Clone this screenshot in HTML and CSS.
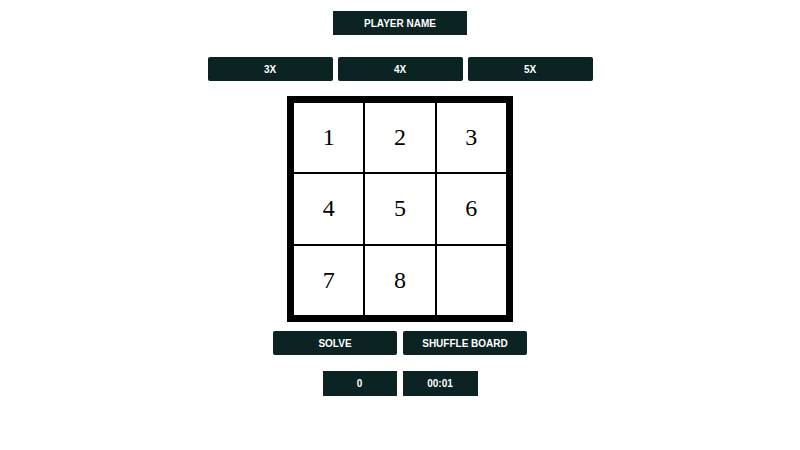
FILE: index.html
```html
<!DOCTYPE html>
<html>
<head>
<meta charset="utf-8">
<link rel="stylesheet" href="styles.css">
</head>
<body>
<main class="app">
  <input class="name" type="text" placeholder="PLAYER NAME">
  <div class="sizes">
    <button class="btn size">3X</button>
    <button class="btn size">4X</button>
    <button class="btn size">5X</button>
  </div>
  <div class="board">
    <div class="cell">1</div>
    <div class="cell">2</div>
    <div class="cell">3</div>
    <div class="cell">4</div>
    <div class="cell">5</div>
    <div class="cell">6</div>
    <div class="cell">7</div>
    <div class="cell">8</div>
    <div class="cell empty"></div>
  </div>
  <div class="actions">
    <button class="btn action">SOLVE</button>
    <button class="btn action">SHUFFLE BOARD</button>
  </div>
  <div class="stats">
    <div class="stat moves">0</div>
    <div class="stat time">00:01</div>
  </div>
</main>
</body>
</html>
```
FILE: styles.css
```css
html, body {
  margin: 0;
  padding: 0;
  background: #ffffff;
}
body {
  font-family: "Liberation Sans", Arial, sans-serif;
}
.app {
  display: flex;
  flex-direction: column;
  align-items: center;
  padding-top: 11px;
}
.name {
  box-sizing: border-box;
  width: 134px;
  height: 24px;
  margin: 0;
  border: none;
  outline: none;
  background: #0b2322;
  color: #ffffff;
  text-align: center;
  font-family: "Liberation Sans", Arial, sans-serif;
  font-weight: bold;
  font-size: 10px;
  padding: 0;
}
.name::placeholder {
  color: #ffffff;
  opacity: 1;
}
.btn {
  box-sizing: border-box;
  height: 24px;
  margin: 0;
  padding: 0;
  border: none;
  border-radius: 2px;
  background: #0b2322;
  color: #ffffff;
  font-family: "Liberation Sans", Arial, sans-serif;
  font-weight: bold;
  font-size: 10px;
}
.sizes {
  display: flex;
  gap: 5px;
  margin-top: 22px;
}
.size {
  width: 125px;
}
.board {
  box-sizing: border-box;
  width: 226px;
  height: 226px;
  margin-top: 15px;
  border: 6px solid #000000;
  display: grid;
  grid-template-columns: repeat(3, 1fr);
  grid-template-rows: repeat(3, 1fr);
}
.cell {
  box-sizing: border-box;
  border: 1px solid #000000;
  display: flex;
  align-items: center;
  justify-content: center;
  font-family: "Liberation Serif", "Times New Roman", serif;
  font-size: 24px;
  color: #000000;
}
.actions {
  display: flex;
  gap: 6px;
  margin-top: 9px;
}
.action {
  width: 124px;
}
.stats {
  display: flex;
  gap: 6px;
  margin-top: 16px;
}
.stat {
  box-sizing: border-box;
  height: 25px;
  background: #0b2322;
  color: #ffffff;
  font-weight: bold;
  font-size: 10px;
  display: flex;
  align-items: center;
  justify-content: center;
}
.moves {
  width: 74px;
}
.time {
  width: 75px;
}
```
